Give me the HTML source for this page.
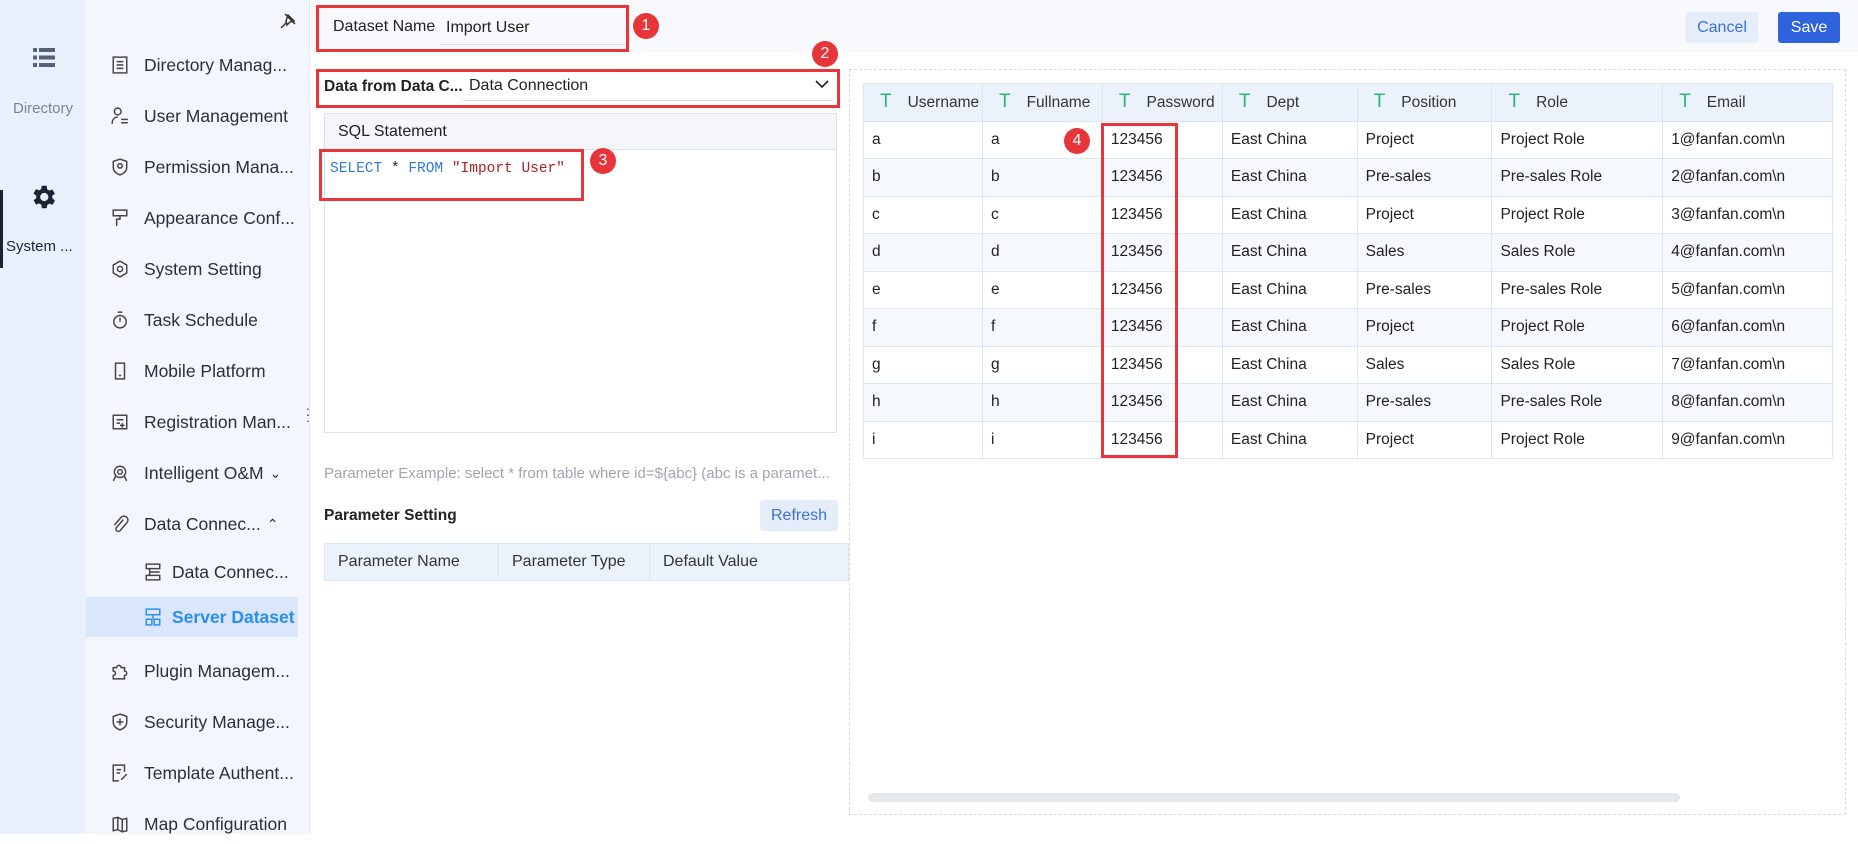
<!DOCTYPE html><html><head><meta charset="utf-8"><style>
*{box-sizing:border-box;margin:0;padding:0}
body{width:1858px;height:834px;overflow:hidden;background:#fff;font-family:"Liberation Sans",sans-serif;color:#222;position:relative}
.a{position:absolute}
.rail{left:0;top:0;width:86px;height:834px;background:#eaf0fb}
.side{left:86px;top:0;width:224px;height:834px;background:#f3f6fd;border-right:1px solid #e3e8f2}
.it{position:absolute;left:0;width:224px;height:40px;display:flex;align-items:center;font-size:17.5px;color:#2b2f3a;white-space:nowrap}
.it svg{margin-left:25px;margin-right:15px;flex:none}
.red{position:absolute;border:3px solid #e8353a}
.badge{position:absolute;width:26px;height:26px;border-radius:50%;background:#e8353a;color:#fff;font-size:16px;text-align:center;line-height:26px}
table{border-collapse:collapse;font-size:15.5px}
td{border-right:1px solid #dde6f3;border-bottom:1px solid #dde6f3;height:37.5px;padding-left:8px;color:#222;white-space:nowrap}
.hd td{background:#ebf2fc;color:#333}
.T{color:#2bb673;font-size:19px;margin:0 16px 0 8px}
tr.z td{background:#f5f8fd}
</style></head><body>
<div class="a rail"></div>
<svg class="a" style="left:33px;top:48px" width="22" height="19" viewBox="0 0 22 19"><g fill="#56627a"><rect x="0" y="0" width="4" height="4"/><rect x="6" y="0" width="16" height="4"/><rect x="0" y="7.5" width="4" height="4"/><rect x="6" y="7.5" width="16" height="4"/><rect x="0" y="15" width="4" height="4"/><rect x="6" y="15" width="16" height="4"/></g></svg>
<div class="a" style="left:0;width:86px;top:100px;text-align:center;font-size:15px;color:#7c8496">Directory</div>
<div class="a" style="left:0;top:190px;width:3px;height:78px;background:#1b2436"></div>
<svg class="a" style="left:28px;top:182px" width="30" height="30" viewBox="0 0 24 24"><path fill="#1b2436" d="M19.4 13a7.5 7.5 0 000-2l2.1-1.6-2-3.5-2.5 1a7.4 7.4 0 00-1.7-1L15 3h-4l-.4 2.7a7.4 7.4 0 00-1.7 1l-2.5-1-2 3.5L6.6 11a7.5 7.5 0 000 2l-2.1 1.6 2 3.5 2.5-1a7.4 7.4 0 001.7 1L11 21h4l.4-2.7a7.4 7.4 0 001.7-1l2.5 1 2-3.5zM13 15.3a3.3 3.3 0 110-6.6 3.3 3.3 0 010 6.6z"/></svg>
<div class="a" style="left:6px;top:238px;font-size:15px;color:#1b2436">System ...</div>

<div class="a side"></div>
<svg class="a" style="left:279px;top:12px" width="18" height="18" viewBox="0 0 18 18" fill="none" stroke="#333" stroke-width="1.5"><path d="M6 2l10 10M9 3l6 6-4 1-3 3-1-4zM7 11l-5 5"/></svg>
<div class="a" style="left:86px;top:0">
<div class="it" style="top:45px"><svg width="18" height="18" viewBox="0 0 16 16" fill="none" stroke="#444" stroke-width="1.3"><rect x="2" y="1" width="12" height="14"/><path d="M5 5h6M5 8h6M5 11h6"/></svg>Directory Manag...</div>
<div class="it" style="top:96px"><svg width="18" height="18" viewBox="0 0 16 16" fill="none" stroke="#444" stroke-width="1.3"><circle cx="6" cy="4" r="3"/><path d="M1 15c0-4 2-6 5-6M9 11h6M9 14h6"/></svg>User Management</div>
<div class="it" style="top:147px"><svg width="18" height="18" viewBox="0 0 16 16" fill="none" stroke="#444" stroke-width="1.3"><path d="M8 1l6 2v5c0 4-3 6-6 7-3-1-6-3-6-7V3z"/><circle cx="8" cy="7" r="2"/></svg>Permission Mana...</div>
<div class="it" style="top:198px"><svg width="18" height="18" viewBox="0 0 16 16" fill="none" stroke="#444" stroke-width="1.3"><rect x="2" y="1" width="12" height="5"/><path d="M8 6v3H5v6"/></svg>Appearance Conf...</div>
<div class="it" style="top:249px"><svg width="18" height="18" viewBox="0 0 16 16" fill="none" stroke="#444" stroke-width="1.3"><path d="M8 1l6 3.5v7L8 15l-6-3.5v-7z"/><circle cx="8" cy="8" r="2.3"/></svg>System Setting</div>
<div class="it" style="top:300px"><svg width="18" height="18" viewBox="0 0 16 16" fill="none" stroke="#444" stroke-width="1.3"><circle cx="8" cy="9.5" r="5.5"/><path d="M6 1h4M8 9.5V6"/></svg>Task Schedule</div>
<div class="it" style="top:351px"><svg width="18" height="18" viewBox="0 0 16 16" fill="none" stroke="#444" stroke-width="1.3"><rect x="4" y="1" width="8" height="14"/><path d="M7 12h2"/></svg>Mobile Platform</div>
<div class="it" style="top:402px"><svg width="18" height="18" viewBox="0 0 16 16" fill="none" stroke="#444" stroke-width="1.3"><rect x="2" y="2" width="12" height="12"/><path d="M5 6h6M5 9h3M10 9v4M8 11h4"/></svg>Registration Man...</div>
<div class="it" style="top:453px"><svg width="18" height="18" viewBox="0 0 16 16" fill="none" stroke="#444" stroke-width="1.3"><circle cx="8" cy="7" r="5"/><circle cx="8" cy="7" r="2"/><path d="M4 11l-2 4M12 11l2 4"/></svg>Intelligent O&amp;M <span style="margin-left:6px;font-size:14px">&#8964;</span></div>
<div class="it" style="top:504px"><svg width="18" height="18" viewBox="0 0 16 16" fill="none" stroke="#444" stroke-width="1.3"><path d="M11 4L5 11a2 2 0 003 3l6-7a3.5 3.5 0 00-5-5L3 9"/></svg>Data Connec... <span style="margin-left:6px;font-size:14px">&#8963;</span></div>
<div class="it" style="top:552px"><svg style="margin-left:58px;margin-right:10px" width="18" height="18" viewBox="0 0 16 16" fill="none" stroke="#444" stroke-width="1.3"><rect x="2" y="1" width="12" height="4"/><rect x="2" y="11" width="12" height="4"/><path d="M5 5v6M5 8h9"/></svg>Data Connec...</div>
<div class="it" style="top:597px;background:#d9e6fb;width:212px;color:#2b8ef0;font-weight:bold"><svg style="margin-left:58px;margin-right:10px" width="18" height="18" viewBox="0 0 16 16" fill="none" stroke="#2b8ef0" stroke-width="1.3"><rect x="2" y="1" width="12" height="5"/><rect x="2" y="10" width="5" height="5"/><rect x="9" y="10" width="5" height="5"/><path d="M8 6v4"/></svg>Server Dataset</div>
<div class="it" style="top:651px"><svg width="18" height="18" viewBox="0 0 16 16" fill="none" stroke="#444" stroke-width="1.3"><path d="M2 5h3a2 2 0 114 0h3v3a2 2 0 110 4v3H2v-3a2 2 0 100-4z"/></svg>Plugin Managem...</div>
<div class="it" style="top:702px"><svg width="18" height="18" viewBox="0 0 16 16" fill="none" stroke="#444" stroke-width="1.3"><path d="M8 1l6 2v5c0 4-3 6-6 7-3-1-6-3-6-7V3z"/><path d="M8 5v6M5 8h6"/></svg>Security Manage...</div>
<div class="it" style="top:753px"><svg width="18" height="18" viewBox="0 0 16 16" fill="none" stroke="#444" stroke-width="1.3"><path d="M12 7V1H2v14h5M5 5h4M5 8h3"/><path d="M9 14l5-5"/></svg>Template Authent...</div>
<div class="it" style="top:804px"><svg width="18" height="18" viewBox="0 0 16 16" fill="none" stroke="#444" stroke-width="1.3"><path d="M2 3l4-1 4 2 4-1v11l-4 1-4-2-4 1zM6 2v11M10 4v11"/></svg>Map Configuration</div>
</div>
<div class="a" style="left:306px;top:408px;font-size:14px;color:#444;line-height:6px;letter-spacing:1px">:<br>:</div>

<div class="a" style="left:311px;top:0;width:1547px;height:52px;background:#f7f9fc"></div>
<div class="a" style="left:333px;top:18px;font-size:16px;color:#222">Dataset Name</div>
<div class="a" style="left:440px;top:9px;width:188px;height:36px;border-bottom:1px solid #d5d9e0;font-size:16px;padding:10px 6px">Import User</div>
<div class="red" style="left:316px;top:5px;width:313px;height:47px"></div>
<div class="badge" style="left:633px;top:13px">1</div>
<div class="a" style="left:1686px;top:12px;width:72px;height:31px;background:#e5edfb;border-radius:3px;color:#3d6fe0;font-size:16px;text-align:center;line-height:31px">Cancel</div>
<div class="a" style="left:1778px;top:12px;width:62px;height:31px;background:#2f63de;border-radius:3px;color:#fff;font-size:16px;text-align:center;line-height:31px">Save</div>

<div class="a" style="left:324px;top:78px;font-size:15.5px;font-weight:bold">Data from Data C...</div>
<div class="a" style="left:463px;top:71px;width:370px;height:30px;border-bottom:1px solid #d5d9e0;font-size:16px;padding:6px 6px">Data Connection</div>
<svg class="a" style="left:815px;top:80px" width="14" height="9" viewBox="0 0 14 9" fill="none" stroke="#222" stroke-width="1.6"><path d="M1 1l6 6 6-6"/></svg>
<div class="red" style="left:316px;top:69px;width:524px;height:39px"></div>
<div class="badge" style="left:812px;top:41px">2</div>
<div class="a" style="left:324px;top:113px;width:513px;height:320px;border:1px solid #dde2ea"></div>
<div class="a" style="left:325px;top:114px;width:511px;height:36px;background:#f4f6fa;border-bottom:1px solid #dde2ea;font-size:16px;padding:9px 13px">SQL Statement</div>
<div class="a" style="left:330px;top:161px;font-family:'Liberation Mono',monospace;font-size:14.5px"><span style="color:#2f7bd8">SELECT</span> * <span style="color:#2f7bd8">FROM</span> <span style="color:#b02222">"Import User"</span></div>
<div class="red" style="left:319px;top:149px;width:265px;height:52px"></div>
<div class="badge" style="left:590px;top:148px">3</div>
<div class="a" style="left:324px;top:465px;font-size:15px;color:#a0a5ae;white-space:nowrap">Parameter Example: select * from table where id=${abc} (abc is a paramet...</div>
<div class="a" style="left:324px;top:507px;font-size:15.5px;font-weight:bold">Parameter Setting</div>
<div class="a" style="left:760px;top:500px;width:78px;height:31px;background:#e5edfb;border-radius:3px;color:#3d6fe0;font-size:16px;text-align:center;line-height:31px">Refresh</div>
<div class="a" style="left:324px;top:543px;width:525px;height:38px;background:#ebf2fc;border:1px solid #dde6f3;font-size:16px;color:#333">
<span class="a" style="left:13px;top:9px">Parameter Name</span><span class="a" style="left:173px;top:0;height:36px;border-left:1px solid #dde6f3"></span>
<span class="a" style="left:187px;top:9px">Parameter Type</span><span class="a" style="left:324px;top:0;height:36px;border-left:1px solid #dde6f3"></span>
<span class="a" style="left:338px;top:9px">Default Value</span></div>

<div class="a" style="left:849px;top:69px;width:997px;height:746px;border:1px dashed #d6d9de"></div>
<table class="a" style="left:863px;top:83px;width:970px;border-left:1px solid #dde6f3;border-top:1px solid #dde6f3">
<colgroup><col style="width:119px"><col style="width:120px"><col style="width:120px"><col style="width:135px"><col style="width:135px"><col style="width:171px"><col style="width:170px"></colgroup>
<tr class="hd"><td><span class="T">T</span>Username</td><td><span class="T">T</span>Fullname</td><td><span class="T">T</span>Password</td><td><span class="T">T</span>Dept</td><td><span class="T">T</span>Position</td><td><span class="T">T</span>Role</td><td><span class="T">T</span>Email</td></tr>
<tr><td>a</td><td>a</td><td>123456</td><td>East China</td><td>Project</td><td>Project Role</td><td>1@fanfan.com\n</td></tr>
<tr class="z"><td>b</td><td>b</td><td>123456</td><td>East China</td><td>Pre-sales</td><td>Pre-sales Role</td><td>2@fanfan.com\n</td></tr>
<tr><td>c</td><td>c</td><td>123456</td><td>East China</td><td>Project</td><td>Project Role</td><td>3@fanfan.com\n</td></tr>
<tr class="z"><td>d</td><td>d</td><td>123456</td><td>East China</td><td>Sales</td><td>Sales Role</td><td>4@fanfan.com\n</td></tr>
<tr><td>e</td><td>e</td><td>123456</td><td>East China</td><td>Pre-sales</td><td>Pre-sales Role</td><td>5@fanfan.com\n</td></tr>
<tr class="z"><td>f</td><td>f</td><td>123456</td><td>East China</td><td>Project</td><td>Project Role</td><td>6@fanfan.com\n</td></tr>
<tr><td>g</td><td>g</td><td>123456</td><td>East China</td><td>Sales</td><td>Sales Role</td><td>7@fanfan.com\n</td></tr>
<tr class="z"><td>h</td><td>h</td><td>123456</td><td>East China</td><td>Pre-sales</td><td>Pre-sales Role</td><td>8@fanfan.com\n</td></tr>
<tr><td>i</td><td>i</td><td>123456</td><td>East China</td><td>Project</td><td>Project Role</td><td>9@fanfan.com\n</td></tr>
</table>
<div class="red" style="left:1101px;top:123px;width:77px;height:335px"></div>
<div class="badge" style="left:1064px;top:128px">4</div>
<div class="a" style="left:868px;top:793px;width:812px;height:9px;border-radius:5px;background:#e6e7e9"></div>
</body></html>
